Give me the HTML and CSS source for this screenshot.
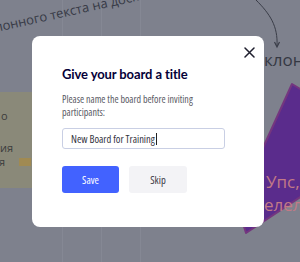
FILE: index.html
```html
<!DOCTYPE html>
<html lang="en">
<head>
<meta charset="utf-8">
<title>Give your board a title</title>
<link rel="stylesheet" href="styles.css">
</head>
<body>
<div class="canvas">
  <div class="grid-line gl1"></div>
  <div class="grid-line gl2"></div>
  <div class="grid-line gl3"></div>
  <div class="tilted">лонного текста на доске</div>
  <svg class="arrow" width="40" height="52" viewBox="250 0 40 52">
    <path d="M256 0 C270 14 278 26 277 46" fill="none" stroke="#3a3d48" stroke-width="1"/>
    <path d="M274.5 42 L277 47 L279.5 42" fill="none" stroke="#3a3d48" stroke-width="1.2"/>
  </svg>
  <div class="klon">клон</div>
  <div class="sticky">
    <span class="s1">о</span>
    <span class="s2">ния</span>
    <span class="s3">я</span>
    <span class="tag"></span>
  </div>
  <svg class="star" width="90" height="180" viewBox="220 75 90 180">
    <polygon points="292,84 262,150 226,170 246,233 302,196 302,90" fill="#5a2c8c" stroke="#74367f" stroke-width="2" stroke-linejoin="round"/>
  </svg>
  <div class="ups">Упс,</div>
  <div class="elel">елел</div>
</div>

<div class="modal">
  <button class="close" aria-label="Close">
    <svg width="11" height="11" viewBox="0 0 11 11"><path d="M1 1 L10 10 M10 1 L1 10" stroke="#1f1f2e" stroke-width="1.5" stroke-linecap="round"/></svg>
  </button>
  <h1 class="title">Give your board a title</h1>
  <p class="desc">Please name the board before inviting participants:</p>
  <div class="input"><span>New Board for Training</span><span class="caret"></span></div>
  <div class="actions">
    <button class="btn primary">Save</button>
    <button class="btn secondary">Skip</button>
  </div>
</div>
</body>
</html>
```

FILE: styles.css
```css
html, body {
  margin: 0;
  padding: 0;
}
body {
  width: 300px;
  height: 262px;
  overflow: hidden;
  background: #7e818d;
  font-family: "Open Sans", "Liberation Sans", sans-serif;
  position: relative;
}
.canvas {
  position: absolute;
  inset: 0;
}
.grid-line {
  position: absolute;
  top: 0;
  bottom: 0;
  width: 1px;
  background: #858894;
}
.gl1 { left: 62px; }
.gl2 { left: 101px; }
.gl3 { left: 140px; }
.tilted {
  position: absolute;
  left: -3px;
  top: 18px;
  font-size: 13px;
  color: #373a46;
  white-space: nowrap;
  transform-origin: 0 100%;
  transform: rotate(-12.5deg);
}
.arrow {
  position: absolute;
  left: 250px;
  top: 0;
}
.klon {
  position: absolute;
  left: 264px;
  top: 48px;
  font-size: 17px;
  color: #353843;
  white-space: nowrap;
}
.sticky {
  position: absolute;
  left: 0;
  top: 92px;
  width: 60px;
  height: 96px;
  background: #8a8979;
  font-size: 11px;
  color: #3c3c3c;
}
.sticky span {
  position: absolute;
  white-space: nowrap;
}
.s1 { left: 1px; top: 16px; }
.s2 { right: 47px; top: 48px; }
.s3 { right: 55px; top: 62px; }
.tag {
  left: 19px;
  top: 66px;
  width: 12px;
  height: 8px;
  background: #a08a52;
}
.star {
  position: absolute;
  left: 220px;
  top: 75px;
}
.ups, .elel {
  position: absolute;
  font-size: 17px;
  color: #c27a86;
  white-space: nowrap;
}
.ups { left: 266px; top: 170px; }
.elel { left: 264px; top: 193px; }

.modal {
  position: absolute;
  left: 32px;
  top: 36px;
  width: 232px;
  height: 191px;
  box-sizing: border-box;
  padding: 30px 30px 0;
  background: #ffffff;
  border-radius: 8px;
  display: flex;
  flex-direction: column;
  align-items: flex-start;
}
.close {
  position: absolute;
  right: 8px;
  top: 10px;
  width: 13px;
  height: 13px;
  padding: 1px;
  border: 0;
  background: none;
  display: flex;
}
.title {
  margin: 0;
  font-family: "Lato", "Liberation Sans", sans-serif;
  font-weight: 700;
  font-size: 13px;
  line-height: 16px;
  color: #050038;
  letter-spacing: -0.1px;
}
.desc {
  margin: 11px 0 0;
  font-size: 10px;
  font-stretch: 75%;
  line-height: 13px;
  color: #595963;
  width: 163px;
}
.input {
  margin-top: 9px;
  width: 163px;
  height: 21px;
  box-sizing: border-box;
  border: 1px solid #c9cfe4;
  border-radius: 3px;
  padding: 0 8px;
  display: flex;
  align-items: center;
  font-size: 10.5px;
  font-stretch: 75%;
  color: #333340;
}
.caret {
  width: 1px;
  height: 12px;
  background: #222;
  margin-left: 1px;
}
.actions {
  margin-top: 17px;
  display: flex;
  gap: 10px;
}
.btn {
  height: 27px;
  border: 0;
  border-radius: 3px;
  font-family: "Open Sans", "Liberation Sans", sans-serif;
  font-size: 10.5px;
  font-stretch: 75%;
  padding: 0;
}
.primary {
  width: 57px;
  background: #4262ff;
  color: #ffffff;
}
.secondary {
  width: 58px;
  background: #f3f3f6;
  color: #3a3a44;
}
```
